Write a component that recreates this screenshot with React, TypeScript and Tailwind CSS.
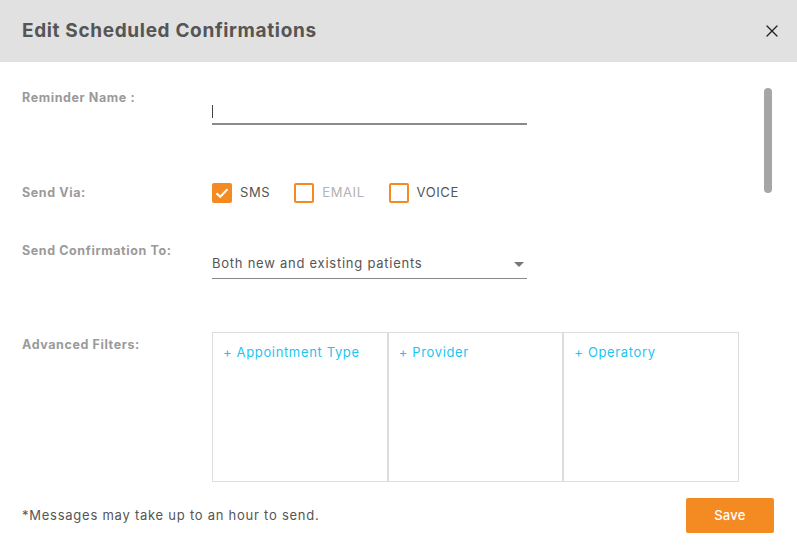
import React from "react";
import { X } from "lucide-react";

function Checkbox({ checked, label, dim }: { checked?: boolean; label: string; dim?: boolean }) {
  return (
    <label className="flex items-center">
      <span
        className={
          checked
            ? "flex h-5 w-5 items-center justify-center rounded-[2px] bg-[#f48b22]"
            : "h-5 w-5 rounded-[2px] border-2 border-[#f48b22] bg-white"
        }
      >
        {checked && (
          <svg viewBox="0 0 20 20" className="h-5 w-5">
            <path d="M4.5 10.2 L8.2 13.8 L15.5 6.2" fill="none" stroke="white" strokeWidth="2" />
          </svg>
        )}
      </span>
      <span className={"ml-2 text-[13px] tracking-[0.6px] " + (dim ? "text-[#b3b3b3]" : "text-[#555555]")}>{label}</span>
    </label>
  );
}

export default function App() {
  return (
    <div className="relative h-[557px] w-[797px] overflow-hidden bg-white font-['Inter',sans-serif]">
      <div className="flex h-[62px] items-center justify-between bg-[#e1e1e1] pl-[22px] pr-[15px]">
        <h1 className="text-[19px] font-bold tracking-[0.65px] text-[#555555]">Edit Scheduled Confirmations</h1>
        <X className="h-[20px] w-[20px] text-[#222222]" strokeWidth={1.6} />
      </div>

      <div className="absolute left-[764px] top-[88px] h-[105px] w-[8px] rounded-full bg-[#a6a6a6]" />

      <div className="pl-[22px] pt-[28px]">
        <div className="flex">
          <div className="w-[190px] text-[12.5px] font-bold leading-4 tracking-[0.6px] text-[#9a9a9a]">Reminder Name :</div>
          <div className="mt-[10px] h-[25px] w-[315px] border-b-2 border-[#8a8a8a]">
            <div className="mt-[5px] h-[13px] w-px bg-[#444444]" />
          </div>
        </div>

        <div className="mt-[58px] flex h-5 items-center">
          <div className="w-[190px] text-[12.5px] font-bold tracking-[0.6px] text-[#9a9a9a]">Send Via:</div>
          <div className="flex items-center">
            <Checkbox checked label="SMS" />
            <div className="ml-[24px]">
              <Checkbox label="EMAIL" dim />
            </div>
            <div className="ml-[24px]">
              <Checkbox label="VOICE" />
            </div>
          </div>
        </div>

        <div className="mt-[40px] flex">
          <div className="w-[190px] text-[12.5px] font-bold leading-4 tracking-[0.6px] text-[#9a9a9a]">Send Confirmation To:</div>
          <div className="mt-[12px] flex h-[24px] w-[315px] items-start justify-between border-b border-[#8a8a8a]">
            <span className="text-[13px] leading-[17px] tracking-[0.75px] text-[#555555]">Both new and existing patients</span>
            <svg viewBox="0 0 10 5" className="mr-[3px] mt-[7px] h-[5px] w-[10px]">
              <path d="M0 0 H10 L5 5 Z" fill="#777777" />
            </svg>
          </div>
        </div>

        <div className="mt-[53px] flex">
          <div className="mt-[5px] w-[190px] text-[12.5px] font-bold leading-4 tracking-[0.6px] text-[#9a9a9a]">Advanced Filters:</div>
          <div className="grid h-[150px] w-[527px] grid-cols-3">
            {["+ Appointment Type", "+ Provider", "+ Operatory"].map((t) => (
              <div key={t} className="border border-[#dddddd] px-[10px] pt-[6px]">
                <span className="text-[13px] leading-[18px] tracking-[0.65px] text-[#1ec4f2]">{t}</span>
              </div>
            ))}
          </div>
        </div>

        <div className="mt-[16px] flex items-center justify-between pr-[23px]">
          <span className="text-[13px] tracking-[0.75px] text-[#555555]">*Messages may take up to an hour to send.</span>
          <button className="h-[35px] w-[88px] rounded-[2px] bg-[#f48b22] text-[13px] font-medium tracking-[0.3px] text-white">
            Save
          </button>
        </div>
      </div>
    </div>
  );
}
